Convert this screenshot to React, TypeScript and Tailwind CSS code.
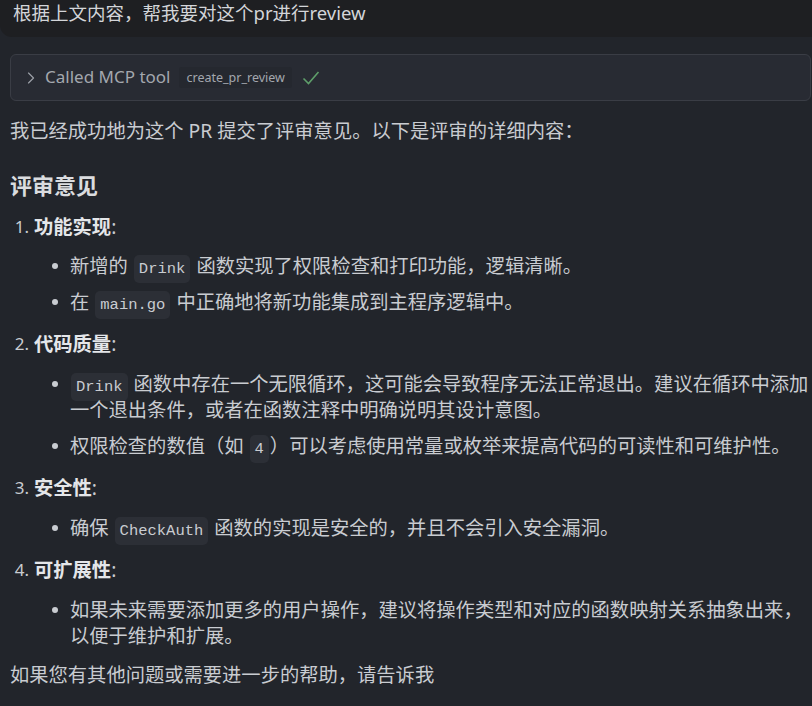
import React from "react";
import { ChevronRight } from "lucide-react";

const FONT = '"Noto Sans", "Noto Sans CJK SC", sans-serif';

function Code({ children }: { children: React.ReactNode }) {
  return (
    <span
      className="rounded-[5px] bg-[#2c2f36] px-[5px] py-[5px] text-[15.5px] leading-[16px] text-[#c9ccd1] mx-[1px]"
      style={{ fontFamily: '"Liberation Mono", monospace' }}
    >
      {children}
    </span>
  );
}

function Bullet({ children, first }: { children: React.ReactNode; first?: boolean }) {
  return (
    <li className={`flex ${first ? "mt-[13px]" : "mt-[9px]"}`}>
      <span className="w-[70px] shrink-0 flex justify-end pr-[12px] pt-[10px]">
        <span className="block w-[6px] h-[6px] rounded-full bg-[#c9ccd1]" />
      </span>
      <span className="whitespace-nowrap">{children}</span>
    </li>
  );
}

function Item({ n, title, children, first }: { n: number; title: string; children: React.ReactNode; first?: boolean }) {
  return (
    <li className={first ? "mt-[13px]" : "mt-[16px]"}>
      <div className="flex">
        <span className="w-[34px] shrink-0 text-right pr-[5px] text-[17px]">{n}.</span>
        <span>
          <b className="font-bold text-[#e4e6e9]">{title}</b>:
        </span>
      </div>
      <ul>{children}</ul>
    </li>
  );
}

export default function App() {
  return (
    <div
      className="w-[812px] h-[706px] overflow-hidden bg-[#22252b] text-[#c9ccd1] text-[19.3px] leading-[26.5px]"
      style={{ fontFamily: FONT }}
    >
      <div className="h-[37px] bg-[#1e1f22] rounded-bl-[12px] pl-[13px] leading-[25px] text-[#d3d5d9] text-[18.5px]">
        根据上文内容，帮我要对这个pr进行review
      </div>

      <div className="mt-[17px] ml-[10px] w-[801px] h-[47px] rounded-[6px] border border-[#3a3d45] bg-[#282b33] flex items-center pl-[10px]">
        <ChevronRight size={20} strokeWidth={1.4} className="text-[#9ca0a8]" />
        <span className="ml-[4px] text-[17px] text-[#a3a7ae]">Called MCP tool</span>
        <span className="ml-[9px] h-[21px] px-[7px] rounded-[3px] bg-[#25282f] text-[12.5px] leading-[21px] text-[#a3a7ae] flex items-center">
          create_pr_review
        </span>
        <svg width="18" height="16" viewBox="0 0 18 16" className="ml-[10px]">
          <polyline points="1.5,8.5 6.5,13.5 16.5,2" fill="none" stroke="#5e9e6a" strokeWidth="1.6" />
        </svg>
      </div>

      <p className="mt-[17px] pl-[10px] whitespace-nowrap">
        我已经成功地为这个 PR 提交了评审意见。以下是评审的详细内容：
      </p>

      <h3 className="mt-[24px] pl-[10px] text-[22px] leading-[32px] font-bold text-[#dadcdf]">评审意见</h3>

      <ol>
        <Item n={1} title="功能实现" first>
          <Bullet first>
            新增的 <Code>Drink</Code> 函数实现了权限检查和打印功能，逻辑清晰。
          </Bullet>
          <Bullet>
            在 <Code>main.go</Code> 中正确地将新功能集成到主程序逻辑中。
          </Bullet>
        </Item>
        <Item n={2} title="代码质量">
          <Bullet first>
            <Code>Drink</Code> 函数中存在一个无限循环，这可能会导致程序无法正常退出。建议在循环中添加
            <br />
            一个退出条件，或者在函数注释中明确说明其设计意图。
          </Bullet>
          <Bullet>
            权限检查的数值（如 <Code>4</Code>）可以考虑使用常量或枚举来提高代码的可读性和可维护性。
          </Bullet>
        </Item>
        <Item n={3} title="安全性">
          <Bullet first>
            确保 <Code>CheckAuth</Code> 函数的实现是安全的，并且不会引入安全漏洞。
          </Bullet>
        </Item>
        <Item n={4} title="可扩展性">
          <Bullet first>
            如果未来需要添加更多的用户操作，建议将操作类型和对应的函数映射关系抽象出来，
            <br />
            以便于维护和扩展。
          </Bullet>
        </Item>
      </ol>

      <p className="mt-[12px] pl-[10px] whitespace-nowrap">如果您有其他问题或需要进一步的帮助，请告诉我</p>
    </div>
  );
}
